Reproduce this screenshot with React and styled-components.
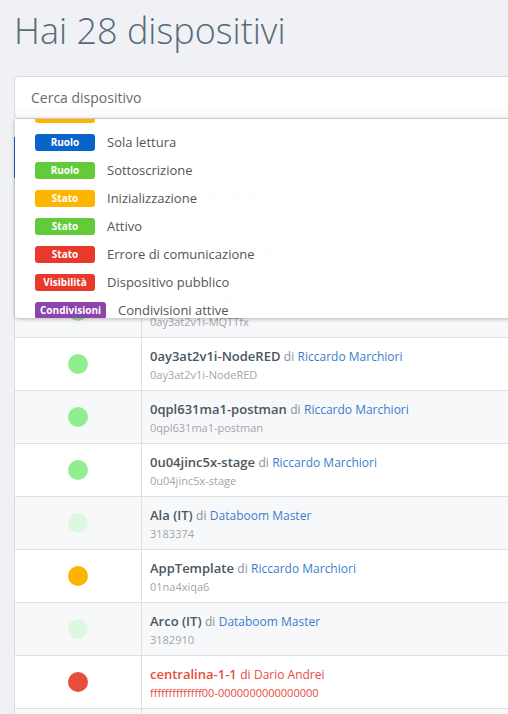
import React from "react";
import styled, { createGlobalStyle } from "styled-components";

const GlobalStyle = createGlobalStyle`
  html, body { margin: 0; padding: 0; }
  body {
    background: #eff1f5;
    font-family: "Open Sans", "Noto Sans", sans-serif;
    overflow: hidden;
  }
  * { box-sizing: border-box; }
`;

const Page = styled.div`
  padding: 0 0 0 14px;
  width: 640px;
`;

const Title = styled.h1`
  margin: 9px 0 0;
  font-size: 36px;
  line-height: 1.2;
  font-weight: 300;
  color: #566b79;
`;

const SearchWrap = styled.div`
  position: relative;
  margin-top: 24px;
`;

const SearchBox = styled.div`
  height: 43px;
  background: linear-gradient(#ffffff 70%, #f8f8f8);
  border: 1px solid #d9dadc;
  border-radius: 4px 0 0 4px;
  display: flex;
  align-items: center;
  padding-left: 16px;
  font-size: 14px;
  color: #6b6b6b;
`;

const Dropdown = styled.div`
  position: absolute;
  left: 1px;
  right: 0;
  top: 43px;
  height: 199px;
  overflow: hidden;
  background: rgba(255, 255, 255, 0.99);
  border-radius: 0 0 4px 4px;
  box-shadow: 0 1px 4px rgba(0, 0, 0, 0.28);
  z-index: 2;
`;

const OptionList = styled.ul`
  list-style: none;
  margin: -19px 0 0;
  padding: 0 0 0 20px;
`;

const Option = styled.li`
  height: 28px;
  display: flex;
  align-items: center;
  gap: 12px;
  font-size: 13px;
  color: #555;
`;

const Badge = styled.span`
  min-width: 60px;
  height: 17px;
  padding: 0 5px;
  border-radius: 3px;
  background: ${(p) => p.$color};
  color: #fff;
  font-size: 10px;
  font-weight: 700;
  display: inline-flex;
  align-items: center;
  justify-content: center;
`;

const Table = styled.div`
  margin-top: 18px;
  background: #fff;
  border-left: 1px solid #dcdde0;
`;

const HeaderRow = styled.div`
  height: 41px;
  background: #e9ecf0;
  border-left: 2px solid #1a62c0;
  margin-left: -1px;
`;

const Row = styled.div`
  display: grid;
  grid-template-columns: 127px 1fr;
  height: 53px;
  border-top: 1px solid #dfe0e3;
  background: ${(p) => (p.$striped ? "#f7f8fa" : "#ffffff")};
`;

const DotCell = styled.div`
  display: flex;
  align-items: center;
  justify-content: center;
  border-right: 1px solid #dfe0e3;
`;

const Dot = styled.span`
  width: 20px;
  height: 20px;
  border-radius: 50%;
  background: ${(p) => p.$color};
`;

const InfoCell = styled.div`
  padding: 9px 0 0 8px;
`;

const NameLine = styled.div`
  font-size: 13px;
  line-height: 19px;
  white-space: nowrap;
`;

const Name = styled.span`
  font-weight: 600;
  color: ${(p) => (p.$error ? "#e74c3c" : "#4a5660")};
`;

const By = styled.span`
  font-size: 12px;
  color: ${(p) => (p.$error ? "#e74c3c" : "#8a8f94")};
`;

const Owner = styled.span`
  font-size: 12px;
  color: ${(p) => (p.$error ? "#e74c3c" : "#3b7dcc")};
`;

const SubLine = styled.div`
  font-size: 11px;
  line-height: 17px;
  color: ${(p) => (p.$error ? "#e74c3c" : "#a3a6a9")};
  white-space: nowrap;
`;

const options = [
  { tag: "Stato", color: "#ffb400", label: "" },
  { tag: "Ruolo", color: "#0a63c6", label: "Sola lettura" },
  { tag: "Ruolo", color: "#63cb3a", label: "Sottoscrizione" },
  { tag: "Stato", color: "#ffb400", label: "Inizializzazione" },
  { tag: "Stato", color: "#63cb3a", label: "Attivo" },
  { tag: "Stato", color: "#e8392b", label: "Errore di comunicazione" },
  { tag: "Visibilità", color: "#e8392b", label: "Dispositivo pubblico" },
  { tag: "Condivisioni", color: "#8e44ad", label: "Condivisioni attive" },
];

const GREEN = "#90ee90";
const PALE = "#dcf8df";
const ORANGE = "#ffb400";
const RED = "#e74c3c";

const devices = [
  { name: "0ay3at2v1i-ESP32", owner: "Riccardo Marchiori", sub: "0ay3at2v1i-ESP32", dot: GREEN },
  { name: "0ay3at2v1i-Modbus", owner: "Riccardo Marchiori", sub: "0ay3at2v1i-Modbus", dot: GREEN },
  { name: "0ay3at2v1i-MQTTfx", owner: "Riccardo Marchiori", sub: "0ay3at2v1i-MQTTfx", dot: GREEN },
  { name: "0ay3at2v1i-NodeRED", owner: "Riccardo Marchiori", sub: "0ay3at2v1i-NodeRED", dot: GREEN },
  { name: "0qpl631ma1-postman", owner: "Riccardo Marchiori", sub: "0qpl631ma1-postman", dot: GREEN },
  { name: "0u04jinc5x-stage", owner: "Riccardo Marchiori", sub: "0u04jinc5x-stage", dot: GREEN },
  { name: "Ala (IT)", owner: "Databoom Master", sub: "3183374", dot: PALE },
  { name: "AppTemplate", owner: "Riccardo Marchiori", sub: "01na4xiqa6", dot: ORANGE },
  { name: "Arco (IT)", owner: "Databoom Master", sub: "3182910", dot: PALE },
  { name: "centralina-1-1", owner: "Dario Andrei", sub: "ffffffffffffff00-0000000000000000", dot: RED, error: true },
  { name: "centralina-1-2", owner: "Dario Andrei", sub: "ffffffffffffff00-0000000000000001", dot: GREEN },
];

export default function App() {
  return (
    <>
      <GlobalStyle />
      <Page>
        <Title>Hai 28 dispositivi</Title>
        <SearchWrap>
          <SearchBox>Cerca dispositivo</SearchBox>
          <Dropdown>
            <OptionList>
              {options.map((o, i) => (
                <Option key={i}>
                  <Badge $color={o.color}>{o.tag}</Badge>
                  {o.label}
                </Option>
              ))}
            </OptionList>
          </Dropdown>
        </SearchWrap>
        <Table>
          <HeaderRow />
          {devices.map((d, i) => (
            <Row key={d.name} $striped={i % 2 === 0}>
              <DotCell>
                <Dot $color={d.dot} />
              </DotCell>
              <InfoCell>
                <NameLine>
                  <Name $error={d.error}>{d.name}</Name>{" "}
                  <By $error={d.error}>di</By>{" "}
                  <Owner $error={d.error}>{d.owner}</Owner>
                </NameLine>
                <SubLine $error={d.error}>{d.sub}</SubLine>
              </InfoCell>
            </Row>
          ))}
        </Table>
      </Page>
    </>
  );
}
